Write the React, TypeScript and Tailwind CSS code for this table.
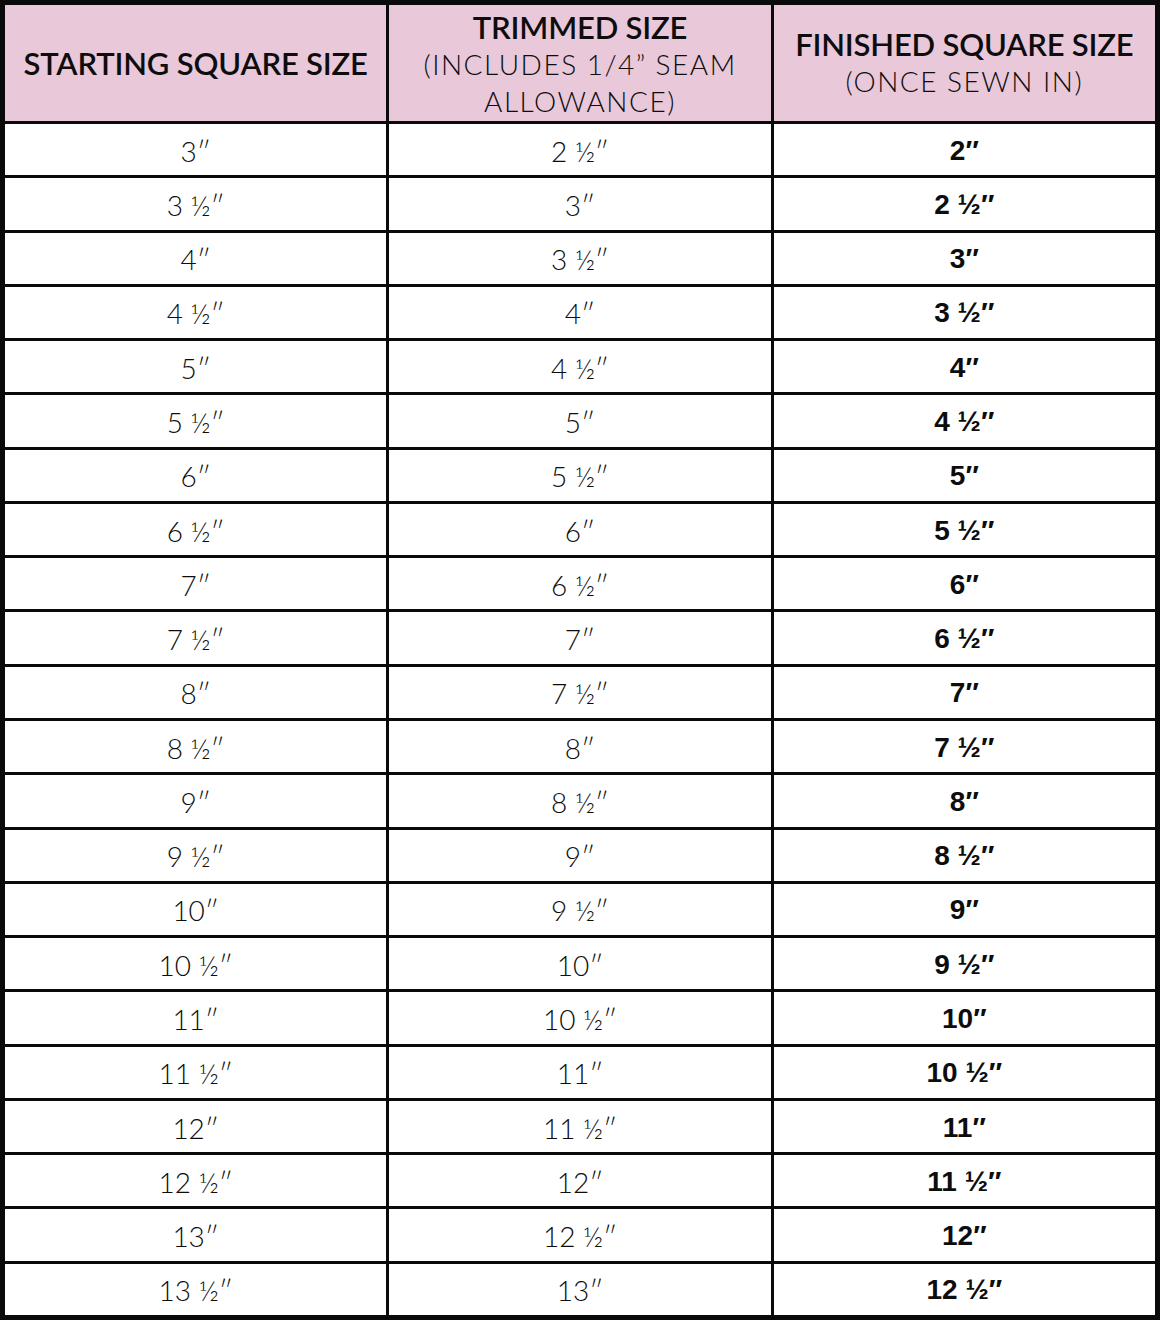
import React from "react";

const rows: [string, string, string][] = [
  ["3″", "2 ½″", "2″"],
  ["3 ½″", "3″", "2 ½″"],
  ["4″", "3 ½″", "3″"],
  ["4 ½″", "4″", "3 ½″"],
  ["5″", "4 ½″", "4″"],
  ["5 ½″", "5″", "4 ½″"],
  ["6″", "5 ½″", "5″"],
  ["6 ½″", "6″", "5 ½″"],
  ["7″", "6 ½″", "6″"],
  ["7 ½″", "7″", "6 ½″"],
  ["8″", "7 ½″", "7″"],
  ["8 ½″", "8″", "7 ½″"],
  ["9″", "8 ½″", "8″"],
  ["9 ½″", "9″", "8 ½″"],
  ["10″", "9 ½″", "9″"],
  ["10 ½″", "10″", "9 ½″"],
  ["11″", "10 ½″", "10″"],
  ["11 ½″", "11″", "10 ½″"],
  ["12″", "11 ½″", "11″"],
  ["12 ½″", "12″", "11 ½″"],
  ["13″", "12 ½″", "12″"],
  ["13 ½″", "13″", "12 ½″"],
];

export default function App() {
  return (
    <div className="w-[1160px] h-[1320px] bg-white">
      <div
        className="w-full h-full border-[5px] border-[#0a0a0a] bg-[#0a0a0a] grid grid-cols-3 gap-[3px] grid-rows-[116px_repeat(22,minmax(0,1fr))] text-[#0d0d0d]"
        style={{ fontFamily: "Lato, 'Liberation Sans', sans-serif" }}
      >
        <div className="bg-[#e9c8da] flex items-center justify-center">
          <span className="text-[31px] font-semibold tracking-[-0.2px] leading-none">STARTING SQUARE SIZE</span>
        </div>
        <div className="bg-[#e9c8da] flex flex-col items-center justify-center leading-[37px] pt-[3px]">
          <span className="text-[31px] font-semibold tracking-[-0.2px]">TRIMMED SIZE</span>
          <span className="text-[28px] font-light tracking-[1.5px]">(INCLUDES 1/4” SEAM</span>
          <span className="text-[28px] font-light tracking-[1.5px]">ALLOWANCE)</span>
        </div>
        <div className="bg-[#e9c8da] flex flex-col items-center justify-center leading-[37px]">
          <span className="text-[31px] font-semibold tracking-[-0.2px]">FINISHED SQUARE SIZE</span>
          <span className="text-[28px] font-light tracking-[1.5px]">(ONCE SEWN IN)</span>
        </div>
        {rows.map((r, i) => (
          <React.Fragment key={i}>
            <div className="bg-white flex items-center justify-center text-[28px] font-light pt-[2px]">{r[0]}</div>
            <div className="bg-white flex items-center justify-center text-[28px] font-light pt-[2px]">{r[1]}</div>
            <div
              className="bg-white flex items-center justify-center text-[28px] font-bold pt-[2px]"
              style={{ fontFamily: "'Liberation Sans', Arial, sans-serif" }}
            >
              {r[2]}
            </div>
          </React.Fragment>
        ))}
      </div>
    </div>
  );
}
